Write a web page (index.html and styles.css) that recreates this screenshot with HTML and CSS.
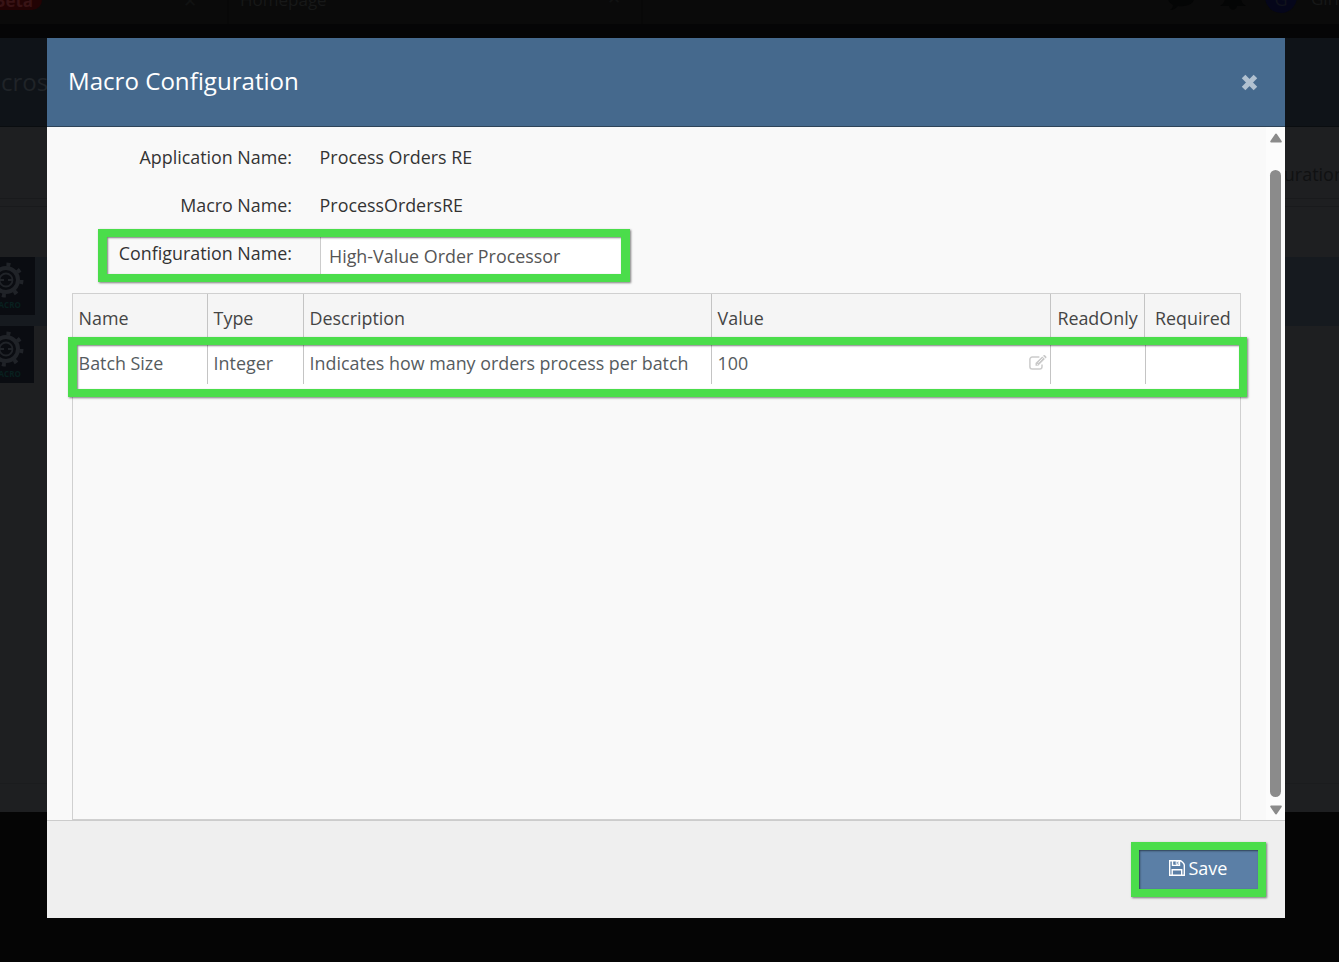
FILE: index.html
```
<!DOCTYPE html>
<html lang="en">
<head>
<meta charset="utf-8">
<title>Macro Configuration</title>
<link rel="stylesheet" href="styles.css">
</head>
<body>
<div class="page">
  <div class="tabs">
    <div class="tab tab-first"><span class="beta">Beta</span><span class="tab-x">✕</span></div>
    <div class="tab tab-home"><span>Homepage</span><span class="tab-x tab-x-high">✕</span></div>
    <div class="tools">
      <svg class="chat" viewBox="0 0 26 22"><path d="M13 0C6 0 0 4 0 9c0 3 2 5 5 7 0 2-1 4-3 5 4 0 6-2 8-4 9 1 16-2 16-8 0-5-6-9-13-9z"/></svg>
      <svg class="bell" viewBox="0 0 26 22"><path d="M13 0c-6 0-8 4-8 9 0 4-2 6-5 8h9c1 5 7 5 8 0h9c-3-2-5-4-5-8 0-5-2-9-8-9z"/></svg>
      <span class="avatar">G</span><span class="user">Giri</span>
    </div>
  </div>
  <div class="banner">Macros</div>
  <div class="content">
    <div class="column-row"><span>Configuration</span></div>
    <div class="gap-row"></div>
    <div class="macro-row selected">
      <div class="tile"><svg viewBox="0 0 36 36"><circle cx="18" cy="18" r="12" class="ring"/><circle cx="18" cy="18" r="15.5" class="teeth"/><circle cx="18" cy="18" r="6.5" class="inner"/><path class="inner" d="M11 18h5m4 0h5"/></svg><b>MACRO</b></div>
    </div>
    <div class="macro-row">
      <div class="tile small"><svg viewBox="0 0 36 36"><circle cx="18" cy="18" r="12" class="ring"/><circle cx="18" cy="18" r="15.5" class="teeth"/><circle cx="18" cy="18" r="6.5" class="inner"/><path class="inner" d="M11 18h5m4 0h5"/></svg><b>MACRO</b></div>
    </div>
    <div class="rest"></div>
  </div>
</div>

<div class="modal">
  <header class="modal-head">
    <h1>Macro Configuration</h1>
    <svg class="close" viewBox="0 0 16 16"><path d="M3 3l10 10M13 3L3 13"/></svg>
  </header>
  <div class="modal-body">
    <main class="pane">
      <div class="field"><label>Application Name:</label><span class="text">Process Orders RE</span></div>
      <div class="field"><label>Macro Name:</label><span class="text">ProcessOrdersRE</span></div>
      <div class="field config"><label>Configuration Name:</label><span class="input">High-Value Order Processor</span><i class="mark mark-config"></i></div>
      <div class="grid">
        <div class="row head"><span>Name</span><span>Type</span><span>Description</span><span>Value</span><span>ReadOnly</span><span class="req">Required</span></div>
        <div class="row-wrap">
          <div class="row data"><span>Batch Size</span><span>Integer</span><span>Indicates how many orders process per batch</span><span class="value">100
            <svg class="edit" viewBox="0 0 18 16"><path class="line" d="M13 9.5v2.3a2.3 2.3 0 0 1-2.3 2.3H3.2A2.3 2.3 0 0 1 .9 11.8V4.3A2.3 2.3 0 0 1 3.2 2h7.2"/><path class="fill" d="M6.5 8.1L13.2 1.4l2.7 2.7-6.7 6.7H6.5zM14 .7l.6-.5q.7-.5 1.4.1l1.2 1.2q.6.7 0 1.4l-.5.5z"/><path class="nick" d="M8 9.2l1 .9M9.3 7.7l4.5-4.5"/></svg></span><span></span><span></span></div>
          <i class="mark mark-row"></i>
        </div>
      </div>
    </main>
    <div class="scroll">
      <svg viewBox="0 0 14 12"><path d="M7 2.6L11.8 9.6H2.2z"/></svg>
      <div class="thumb"></div>
      <svg viewBox="0 0 14 12"><path d="M7 10.4L11.8 3.4H2.2z"/></svg>
    </div>
  </div>
  <footer class="modal-foot">
    <button class="save"><svg viewBox="0 0 16 16"><path d="M.7.7h10.6q1 .2 1.7 1l1.3 1.4q1 .8 1 2v10.2H.7zM3.5.9v4.5h7V.9M3.2 15V9.7h9.5V15"/><path class="slot" d="M7.2 1.3h2v3h-2z"/></svg>Save<i class="mark mark-save"></i></button>
  </footer>
</div>
</body>
</html>
```
FILE: styles.css
```
* { box-sizing: border-box; }
body { margin: 0; width: 1339px; height: 962px; overflow: hidden; background: #050505; font-family: "Open Sans", sans-serif; }

/* Dimmed application behind the dialog */
.page { display: flex; flex-direction: column; height: 962px; overflow: hidden; }
.tabs { display: flex; height: 38px; background: #0a0a0a; border-bottom: 14px solid #050506; color: #171818; font-size: 17px; line-height: 24px; }
.tab { display: flex; justify-content: space-between; height: 24px; border-right: 2px solid #080808; }
.tab span { margin-top: -12px; }
.tab .tab-x { margin-top: -11px; color: #111212; }
.tab .tab-x-high { margin-top: -14px; }
.tab-first { width: 229px; padding-right: 30px; }
.tab-home { width: 414px; padding: 0 20px 0 11px; }
.tab .beta { width: 42px; height: 22px; border-radius: 0 10px 10px 0; background: #220304; color: #381315; font-size: 17px; font-weight: 700; line-height: 25px; text-indent: -6px; }
.tools { display: flex; margin-left: auto; width: 171px; gap: 26px; }
.tools svg { width: 26px; height: 22px; margin-top: -11px; fill: #040505; }
.tools .avatar { width: 32px; height: 32px; margin: -19px 0 0 -7px; border-radius: 50%; background: #05061a; color: #11131c; text-align: center; line-height: 37px; font-size: 18px; }
.tools .user { margin: -13px 0 0 -12px; }
.banner { height: 89px; background: #0f1318; border-bottom: 1px solid #0a0d10; color: #202428; font-size: 24px; line-height: 88px; text-indent: -34px; }
.content { display: flex; flex-direction: column; height: 685px; background: #1e1f21; }
.column-row { height: 72px; padding-top: 24px; border-bottom: 1px solid #191a1c; color: #101112; font-size: 18px; text-align: right; }
.column-row span { display: block; margin-right: -6px; line-height: 46px; }
.gap-row { height: 58px; background: linear-gradient(#191a1c, #191a1c) 0 7px / 100% 1px no-repeat; }
.macro-row { height: 69px; }
.macro-row.selected { background: #161a1f; }
.tile { display: flex; flex-direction: column; align-items: flex-start; width: 35px; height: 58px; padding-top: 5px; overflow: hidden; background: #0a0c11; }
.tile svg { flex: none; width: 36px; height: 36px; margin-left: -12px; fill: none; }
.tile.small { width: 34px; height: 57px; }
.ring { stroke: #202328; stroke-width: 4; }
.teeth { stroke: #202328; stroke-width: 4; stroke-dasharray: 4 8.17; }
.inner { stroke: #202328; stroke-width: 1.8; }
.tile b { margin-left: -9px; color: #08201f; font: 700 8px/14px "Open Sans", sans-serif; }
.rest { flex: 1; background: linear-gradient(#1b1c1e, #1b1c1e) 0 388px / 100% 1px no-repeat; }

/* Dialog */
.modal { position: absolute; left: 47px; top: 38px; display: flex; flex-direction: column; width: 1238px; height: 880px; background: #f9f9f9; color: #333; font-size: 17.88px; }
.modal-head { display: flex; align-items: center; justify-content: space-between; height: 89px; padding: 0 26px 0 21px; background: #45698d; border-bottom: 1px solid #2e4459; }
.modal-head h1 { margin: 0; color: #fff; font-size: 24.1px; font-weight: 400; line-height: 86px; height: 88px; }
.close { width: 19px; height: 19px; margin-top: 1px; fill: none; stroke: #b1c1d0; stroke-width: 4.3; }
.modal-body { display: flex; height: 693px; }
.pane { width: 1219px; padding: 6px 0 0 25px; }
.field { display: flex; height: 48px; line-height: 48px; }
.field label { width: 220px; text-align: right; }
.text { margin-left: 27.6px; }
.config { position: relative; }
.input { width: 302px; height: 38px; margin: 8px 0 0 28px; padding-left: 8px; border-left: 1px solid #ccc; background: #fff; color: #555; line-height: 38px; }
.grid { width: 1169px; height: 527px; margin-top: 16px; border: 1px solid #d0d0d0; }
.row { display: grid; grid-template-columns: 135px 96px 408px 339px 94px 1fr; }
.row > span { padding-left: 5.6px; border-right: 1px solid #c4c4c4; white-space: nowrap; }
.row > span:last-child { border-right: 0; }
.head { height: 44px; background: #f5f5f5; color: #444; line-height: 49px; }
.row > span:nth-child(5) { padding-left: 6.4px; }
.head .req { padding-left: 10px; }
.row-wrap { position: relative; height: 52px; background: #fff; }
.data { height: 46px; grid-template-columns: 135px 96px 408px 339px 95px 1fr; color: #555b5e; line-height: 51px; }
.data > span { height: 46px; }
.row .value { display: flex; justify-content: space-between; padding-right: 3px; }
.edit { width: 18px; height: 16px; margin-top: 17px; fill: none; }
.edit .line { stroke: #ccc; stroke-width: 1.5; }
.edit .fill { fill: #c9c9c9; }
.edit .nick { stroke: #fff; stroke-width: .8; }
.scroll { display: flex; flex-direction: column; align-items: center; width: 19px; padding: 5px 0 0; background: #fcfcfc; }
.scroll svg { width: 14px; height: 12px; flex: none; fill: #8b8b8b; stroke: #8b8b8b; stroke-width: 2; stroke-linejoin: round; }
.thumb { flex: none; width: 11px; height: 627px; margin: 26px 0 6px; border-radius: 6px; background: #8b8b8b; }
.modal-foot { display: flex; justify-content: flex-end; height: 98px; padding: 28px 26px 0; background: #efefef; border-top: 1px solid #ccc; }
.save { position: relative; display: flex; align-items: center; justify-content: center; gap: 4px; width: 121px; height: 40px; padding: 0 1px 2px 0; border: 0; background: #5b7fa6; color: #fff; font: 18px "Open Sans", sans-serif; }
.save svg { width: 16px; height: 16px; fill: none; stroke: #fff; stroke-width: 1.4; }
.save .slot { stroke-width: 1; }

/* Green callout frames */
.mark { position: absolute; border: 8px solid #4bdd4b; box-shadow: 1px 1px 2px rgba(0, 0, 0, .5), inset 1px 1px 2px rgba(0, 0, 0, .5); pointer-events: none; }
.mark-config { left: 26px; top: 0; width: 532px; height: 53px; border-width: 8px 9px 8px 9px; }
.mark-row { left: -5px; top: -1px; width: 1179px; height: 60px; border-left-width: 9px; }
.mark-save { left: -7px; top: -7px; width: 135px; height: 55px; border-width: 8px; }
```
